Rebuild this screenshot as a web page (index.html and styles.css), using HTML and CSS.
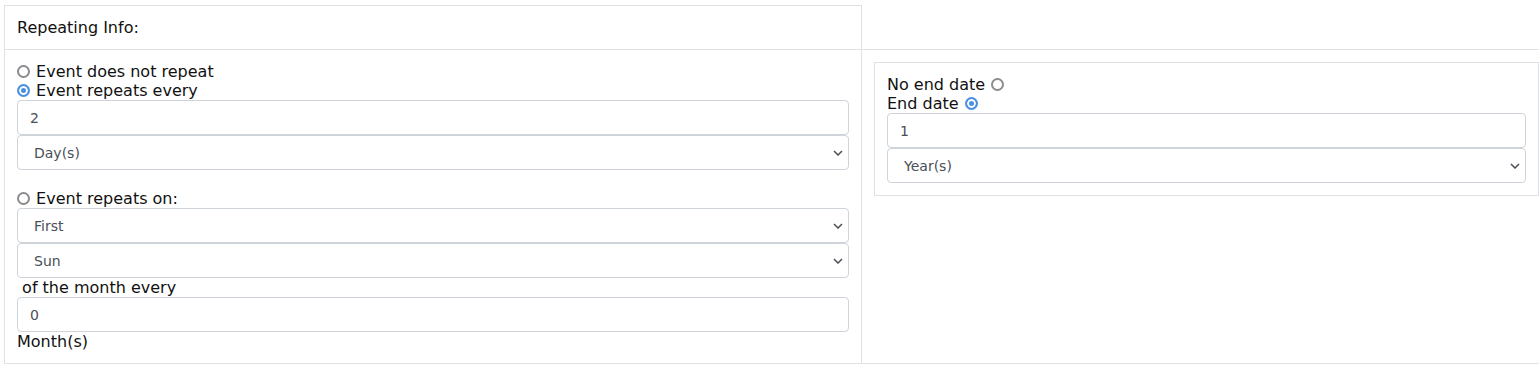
FILE: index.html
```html
<!DOCTYPE html>
<html lang="en">
<head>
    <meta charset="UTF-8">
    <meta name="viewport" content="width=device-width, initial-scale=1.0">
    <title>Repeating Info</title>
    <link rel="stylesheet" href="styles.css">
</head>
<body>
    <div class="repeat-panel">
        <div class="head-row">
            <div class="head-title">Repeating Info:</div>
            <div class="head-empty"></div>
        </div>

        <div class="body-row">
            <div class="repeat-cell">
                <label class="radio-line"><input type="radio" name="repeat"> Event does not repeat</label>
                <label class="radio-line"><input type="radio" name="repeat" checked> Event repeats every</label>
                <input class="form-field" type="text" value="2">
                <div class="select-wrap">
                    <select class="form-field">
                        <option>Day(s)</option>
                        <option>Week(s)</option>
                        <option>Month(s)</option>
                        <option>Year(s)</option>
                    </select>
                    <svg class="chevron" width="10" height="6" viewBox="0 0 10 6"><path d="M1 1l4 4 4-4" fill="none" stroke="#4a4f55" stroke-width="1.5"/></svg>
                </div>

                <label class="radio-line spaced"><input type="radio" name="repeat"> Event repeats on:</label>
                <div class="select-wrap">
                    <select class="form-field">
                        <option>First</option>
                        <option>Second</option>
                        <option>Third</option>
                        <option>Fourth</option>
                        <option>Last</option>
                    </select>
                    <svg class="chevron" width="10" height="6" viewBox="0 0 10 6"><path d="M1 1l4 4 4-4" fill="none" stroke="#4a4f55" stroke-width="1.5"/></svg>
                </div>
                <div class="select-wrap">
                    <select class="form-field">
                        <option>Sun</option>
                        <option>Mon</option>
                        <option>Tue</option>
                        <option>Wed</option>
                        <option>Thu</option>
                        <option>Fri</option>
                        <option>Sat</option>
                    </select>
                    <svg class="chevron" width="10" height="6" viewBox="0 0 10 6"><path d="M1 1l4 4 4-4" fill="none" stroke="#4a4f55" stroke-width="1.5"/></svg>
                </div>
                <div class="text-line">&nbsp;of the month every</div>
                <input class="form-field" type="text" value="0">
                <div class="text-line">Month(s)</div>
            </div>

            <div class="end-cell">
                <div class="end-box">
                    <label class="radio-line">No end date <input type="radio" name="end"></label>
                    <label class="radio-line">End date <input type="radio" name="end" checked></label>
                    <input class="form-field" type="text" value="1">
                    <div class="select-wrap">
                        <select class="form-field">
                            <option>Day(s)</option>
                            <option>Week(s)</option>
                            <option>Month(s)</option>
                            <option selected>Year(s)</option>
                        </select>
                        <svg class="chevron" width="10" height="6" viewBox="0 0 10 6"><path d="M1 1l4 4 4-4" fill="none" stroke="#4a4f55" stroke-width="1.5"/></svg>
                    </div>
                </div>
            </div>
        </div>
    </div>
</body>
</html>
```

FILE: styles.css
```css
* {
    margin: 0;
    padding: 0;
    box-sizing: border-box;
}

body {
    font-family: 'DejaVu Sans', sans-serif;
    font-size: 16px;
    line-height: 19px;
    color: #111;
    background: white;
    overflow: hidden;
}

.repeat-panel {
    width: 1547px;
    margin: 5px 0 0 4px;
}

.head-row,
.body-row {
    display: grid;
    grid-template-columns: 858px 1fr;
    border-bottom: 1px solid #dee2e6;
}

.head-title {
    border: 1px solid #dee2e6;
    border-bottom: none;
    padding: 12px;
    height: 44px;
}

.repeat-cell {
    border-left: 1px solid #dee2e6;
    border-right: 1px solid #dee2e6;
    padding: 12px;
}

.end-cell {
    padding: 12px;
}

.end-box {
    border: 1px solid #dee2e6;
    padding: 12px;
}

.radio-line {
    display: block;
    height: 19px;
    white-space: nowrap;
}

.radio-line.spaced {
    margin-top: 19px;
}

.radio-line input {
    appearance: none;
    display: inline-block;
    width: 13px;
    height: 13px;
    border: 2px solid #8b8b90;
    border-radius: 50%;
    margin: 0 1px 0 0;
    vertical-align: -1px;
    background: white;
}

.radio-line input:checked {
    border-color: #4a90e2;
    background: #4a90e2;
    box-shadow: inset 0 0 0 2px white;
}

.end-box .radio-line input {
    margin: 0 0 0 1px;
}

.text-line {
    height: 19px;
    white-space: nowrap;
}

.form-field {
    display: block;
    width: 100%;
    height: 35px;
    border: 1px solid #ced4da;
    border-radius: 4px;
    padding: 0 12px;
    font-family: 'DejaVu Sans', sans-serif;
    font-size: 14px;
    color: #495057;
    background: white;
    outline: none;
}

.select-wrap {
    position: relative;
}

.select-wrap .form-field {
    appearance: none;
    padding-left: 16px;
}

.chevron {
    position: absolute;
    right: 6px;
    top: 15px;
    pointer-events: none;
}
```
